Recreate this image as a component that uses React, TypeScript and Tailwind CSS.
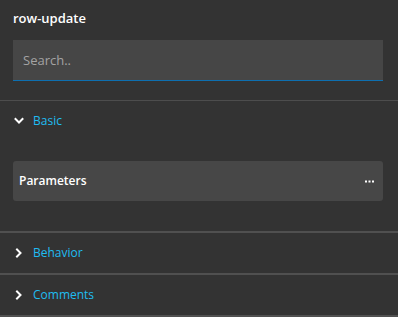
import { useState } from 'react'

const Chevron = ({ open }: { open: boolean }) => (
    <svg
        width="10"
        height="10"
        viewBox="0 0 10 10"
        className="shrink-0"
        fill="none"
        stroke="#ffffff"
        strokeWidth="2"
        strokeLinecap="square"
    >
        {open ? (
            <path d="M1.5 3 L5 6.5 L8.5 3" />
        ) : (
            <path d="M3 1.5 L6.5 5 L3 8.5" />
        )}
    </svg>
)

const Dots = () => (
    <svg width="10" height="3" viewBox="0 0 10 3" fill="#ffffff">
        <rect x="0" y="0.5" width="2" height="2" />
        <rect x="3.5" y="0.5" width="2" height="2" />
        <rect x="7" y="0.5" width="2" height="2" />
    </svg>
)

const Section = ({
    title,
    open,
    onToggle,
    children,
}: {
    title: string
    open: boolean
    onToggle: () => void
    children?: React.ReactNode
}) => (
    <div className="border-b-2 border-[#505050]">
        <button
            onClick={onToggle}
            className="flex h-10 w-full items-center gap-[9px] pl-[14px] text-left"
        >
            <Chevron open={open} />
            <span className="text-[12px] text-[#1fbdf2]">{title}</span>
        </button>
        {open && children}
    </div>
)

const App = () => {
    const [open, setOpen] = useState({ basic: true, behavior: false, comments: false })

    return (
        <div
            className="h-[317px] w-[398px] overflow-hidden bg-[#333333] text-white"
            style={{ fontFamily: '"Open Sans", "Noto Sans", sans-serif' }}
        >
            <div className="border-b border-[#4d4d4d] pb-[19px] pl-[13px] pr-[15px] pt-[9px]">
                <h1 className="mb-[12px] text-[13px] font-semibold leading-[19px]">
                    row-update
                </h1>
                <input
                    placeholder="Search.."
                    className="h-[41px] w-full border-b border-[#0d6fb0] bg-[#464646] px-[10px] text-[13px] text-white outline-none placeholder:text-[#a3a3a3]"
                />
            </div>
            <Section
                title="Basic"
                open={open.basic}
                onToggle={() => setOpen({ ...open, basic: !open.basic })}
            >
                <div className="pb-[30px] pl-[13px] pr-[15px] pt-[20px]">
                    <div className="flex h-10 items-center justify-between rounded-[3px] bg-[#474747] pl-[6px] pr-[8px]">
                        <span className="text-[12px] font-semibold">Parameters</span>
                        <Dots />
                    </div>
                </div>
            </Section>
            <Section
                title="Behavior"
                open={open.behavior}
                onToggle={() => setOpen({ ...open, behavior: !open.behavior })}
            />
            <Section
                title="Comments"
                open={open.comments}
                onToggle={() => setOpen({ ...open, comments: !open.comments })}
            />
        </div>
    )
}

export default App
